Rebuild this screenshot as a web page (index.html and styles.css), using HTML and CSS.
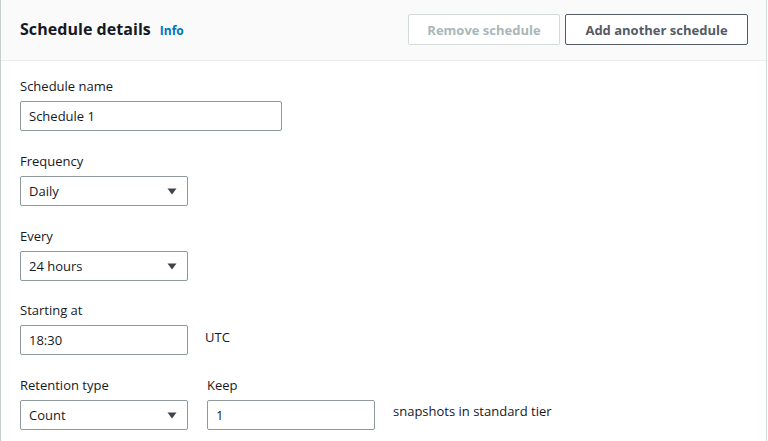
FILE: index.html
```html
<!DOCTYPE html>
<html lang="en">
<head>
<meta charset="utf-8">
<title>Schedule details</title>
<link rel="stylesheet" href="styles.css">
</head>
<body>
<div class="panel">
  <div class="panel-header">
    <h2 class="title">Schedule details <a class="info" href="#">Info</a></h2>
    <div class="actions">
      <button class="btn btn-disabled" type="button">Remove schedule</button>
      <button class="btn btn-normal" type="button">Add another schedule</button>
    </div>
  </div>
  <div class="panel-body">
    <div class="field">
      <label class="label">Schedule name</label>
      <div class="input input-name">Schedule 1</div>
    </div>
    <div class="field">
      <label class="label">Frequency</label>
      <div class="select">
        <span>Daily</span>
        <svg class="caret" width="10" height="7" viewBox="0 0 10 7"><polygon points="0.5,0.5 9.5,0.5 5,6.5" fill="#3f444b"/></svg>
      </div>
    </div>
    <div class="field">
      <label class="label">Every</label>
      <div class="select">
        <span>24 hours</span>
        <svg class="caret" width="10" height="7" viewBox="0 0 10 7"><polygon points="0.5,0.5 9.5,0.5 5,6.5" fill="#3f444b"/></svg>
      </div>
    </div>
    <div class="field field-start">
      <label class="label">Starting at</label>
      <div class="control-row">
        <div class="input input-short">18:30</div>
        <span class="suffix">UTC</span>
      </div>
    </div>
    <div class="field retention">
      <label class="label">Retention type</label>
      <label class="label">Keep</label>
      <span></span>
      <div class="select">
        <span>Count</span>
        <svg class="caret" width="10" height="7" viewBox="0 0 10 7"><polygon points="0.5,0.5 9.5,0.5 5,6.5" fill="#3f444b"/></svg>
      </div>
      <div class="input input-short">1</div>
      <span class="suffix">snapshots in standard tier</span>
    </div>
  </div>
</div>
</body>
</html>
```

FILE: styles.css
```css
* { box-sizing: border-box; }
html, body {
  margin: 0;
  padding: 0;
  background: #ffffff;
  overflow: hidden;
}
body {
  font-family: "Open Sans", "Noto Sans", sans-serif;
  font-size: 13px;
  line-height: 20px;
  color: #16191f;
}
.panel {
  width: 767px;
  min-height: 441px;
  border-left: 1px solid #c9cfd0;
  border-right: 1px solid #d5dbdb;
  background: #ffffff;
}
.panel-header {
  height: 61px;
  background: #fafafa;
  border-bottom: 1px solid #eaeded;
  display: flex;
  align-items: flex-start;
  justify-content: space-between;
  padding: 14px 18px 0 19px;
}
.title {
  margin: 4px 0 0;
  font-size: 16px;
  line-height: 22px;
  font-weight: 700;
  letter-spacing: 0.05px;
  color: #16191f;
  display: flex;
  align-items: baseline;
}
.info {
  margin-left: 9px;
  font-size: 12px;
  font-weight: 700;
  letter-spacing: 0;
  color: #0073bb;
  text-decoration: none;
}
.actions {
  display: flex;
  gap: 5px;
}
.btn {
  height: 31px;
  font-family: "Open Sans", "Noto Sans", sans-serif;
  font-size: 13px;
  font-weight: 700;
  line-height: 20px;
  background: #ffffff;
  border-radius: 2px;
  padding: 0 10px;
  white-space: nowrap;
  text-align: center;
}
.btn-disabled {
  width: 152px;
  color: #aab7b8;
  border: 1px solid #d5dbdb;
}
.btn-normal {
  width: 183px;
  color: #545b64;
  border: 1px solid #545b64;
}
.panel-body {
  padding: 15px 20px 0 19px;
  display: flex;
  flex-direction: column;
  gap: 20px;
}
.field {
  display: flex;
  flex-direction: column;
  gap: 5px;
}
.field-start { margin-top: -1px; }
.label {
  display: block;
  color: #16191f;
}
.input,
.select {
  height: 30px;
  border: 1px solid #8f999b;
  border-radius: 2px;
  background: #ffffff;
  padding: 4px 8px;
  color: #16191f;
}
.input-name { width: 262px; }
.input-short { width: 168px; }
.select {
  width: 168px;
  display: flex;
  align-items: center;
  justify-content: space-between;
  padding-right: 10px;
}
.caret { display: block; }
.control-row {
  display: flex;
  align-items: flex-start;
  gap: 17px;
}
.suffix {
  padding-top: 2px;
  color: #16191f;
}
.retention {
  display: grid;
  grid-template-columns: 168px 168px auto;
  column-gap: 19px;
  row-gap: 5px;
  justify-content: start;
}
.retention .select,
.retention .input { width: 168px; }
.retention .suffix { padding-top: 1px; margin-left: -1px; }
```
